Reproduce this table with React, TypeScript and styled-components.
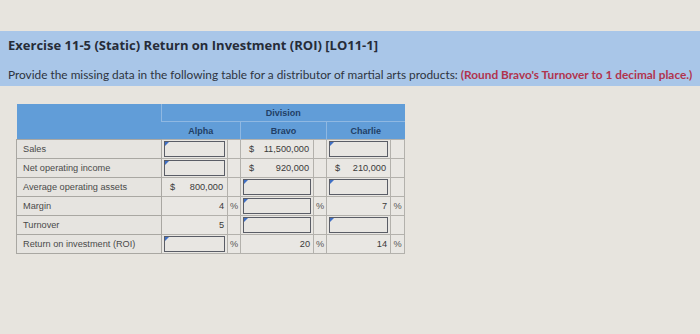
import React from 'react';
import styled, { createGlobalStyle } from 'styled-components';

const GlobalStyle = createGlobalStyle`
  html, body {
    margin: 0;
    padding: 0;
    background: #e7e4de;
  }
  body {
    width: 700px;
    height: 334px;
    overflow: hidden;
    font-family: 'Open Sans', 'Liberation Sans', sans-serif;
  }
`;

const Page = styled.div`
  padding-top: 31px;
`;

const Highlight = styled.div`
  background: #a9c6e8;
  height: 55px;
  padding: 5px 0 0 8px;
  box-sizing: border-box;
`;

const Title = styled.h1`
  margin: 0;
  font-size: 13px;
  font-weight: 700;
  color: #262c38;
  line-height: 18px;
`;

const Prompt = styled.p`
  margin: 14px 0 0;
  font-family: Lato, 'Liberation Sans', sans-serif;
  font-size: 11.85px;
  color: #2e3440;
  line-height: 14px;
  white-space: nowrap;
`;

const Note = styled.span`
  color: #b1344e;
  font-weight: 700;
`;

const Grid = styled.table`
  margin: 18px 0 0 16px;
  width: 388px;
  table-layout: fixed;
  border-collapse: collapse;
  font-family: 'Liberation Sans', Arial, sans-serif;
  font-size: 9.2px;
  color: #3a3a3a;
`;

const Col = styled.col<{ $w: number }>`
  width: ${(p) => p.$w}px;
`;

const Head = styled.th<{ $top?: boolean }>`
  background: #619dd8;
  color: #213f66;
  font-weight: 700;
  font-size: 9px;
  height: 17px;
  padding: 0;
  border-left: 1px solid #8fb8e2;
  border-bottom: ${(p) => (p.$top ? '1px solid #8fb8e2' : 'none')};
  &:first-child {
    border-left: none;
  }
`;

const Label = styled.td`
  height: 18px;
  padding: 0 0 0 6px;
  border: 1px solid #a9a7a2;
  background: #e6e4e0;
  color: #4a4a4a;
  white-space: nowrap;
  overflow: hidden;
`;

const Cell = styled.td`
  height: 18px;
  padding: 0;
  border: 1px solid #b3b1ac;
  background: #e9e7e3;
`;

const Amount = styled.div`
  display: flex;
  justify-content: space-between;
  padding: 0 4px 0 8px;
`;

const Right = styled.div`
  text-align: right;
  padding-right: 3px;
`;

const Unit = styled.div`
  text-align: center;
  color: #555;
`;

const Input = styled.div`
  position: relative;
  height: 14px;
  margin: 0 2px;
  border: 1.5px solid #5a5d66;
  background: #e8e6e2;
  &::before {
    content: '';
    position: absolute;
    left: 0;
    top: 0;
    border-top: 4px solid #3f6fc4;
    border-right: 4px solid transparent;
  }
`;

type Val =
  | { kind: 'input' }
  | { kind: 'money'; v: string }
  | { kind: 'num'; v: string };

interface Row {
  label: string;
  cells: [Val, string, Val, string, Val, string];
}

const inp: Val = { kind: 'input' };

const rows: Row[] = [
  { label: 'Sales', cells: [inp, '', { kind: 'money', v: '11,500,000' }, '', inp, ''] },
  {
    label: 'Net operating income',
    cells: [inp, '', { kind: 'money', v: '920,000' }, '', { kind: 'money', v: '210,000' }, ''],
  },
  { label: 'Average operating assets', cells: [{ kind: 'money', v: '800,000' }, '', inp, '', inp, ''] },
  { label: 'Margin', cells: [{ kind: 'num', v: '4' }, '%', inp, '%', { kind: 'num', v: '7' }, '%'] },
  { label: 'Turnover', cells: [{ kind: 'num', v: '5' }, '', inp, '', inp, ''] },
  {
    label: 'Return on investment (ROI)',
    cells: [inp, '%', { kind: 'num', v: '20' }, '%', { kind: 'num', v: '14' }, '%'],
  },
];

const widths = [145, 66, 13, 73, 13, 64, 14];

const renderVal = (v: Val) => {
  if (v.kind === 'input') return <Input />;
  if (v.kind === 'money')
    return (
      <Amount>
        <span>$</span>
        <span>{v.v}</span>
      </Amount>
    );
  return <Right>{v.v}</Right>;
};

export default function App() {
  return (
    <Page>
      <GlobalStyle />
      <Highlight>
        <Title>Exercise 11-5 (Static) Return on Investment (ROI) [LO11-1]</Title>
        <Prompt>
          Provide the missing data in the following table for a distributor of martial arts products:{' '}
          <Note>(Round Bravo's Turnover to 1 decimal place.)</Note>
        </Prompt>
      </Highlight>
      <Grid>
        <colgroup>
          {widths.map((w, i) => (
            <Col key={i} $w={w} />
          ))}
        </colgroup>
        <thead>
          <tr>
            <Head rowSpan={2} />
            <Head colSpan={6} $top>
              Division
            </Head>
          </tr>
          <tr>
            <Head colSpan={2}>Alpha</Head>
            <Head colSpan={2}>Bravo</Head>
            <Head colSpan={2}>Charlie</Head>
          </tr>
        </thead>
        <tbody>
          {rows.map((r) => (
            <tr key={r.label}>
              <Label>{r.label}</Label>
              {r.cells.map((c, i) => (
                <Cell key={i}>{typeof c === 'string' ? <Unit>{c}</Unit> : renderVal(c)}</Cell>
              ))}
            </tr>
          ))}
        </tbody>
      </Grid>
    </Page>
  );
}
